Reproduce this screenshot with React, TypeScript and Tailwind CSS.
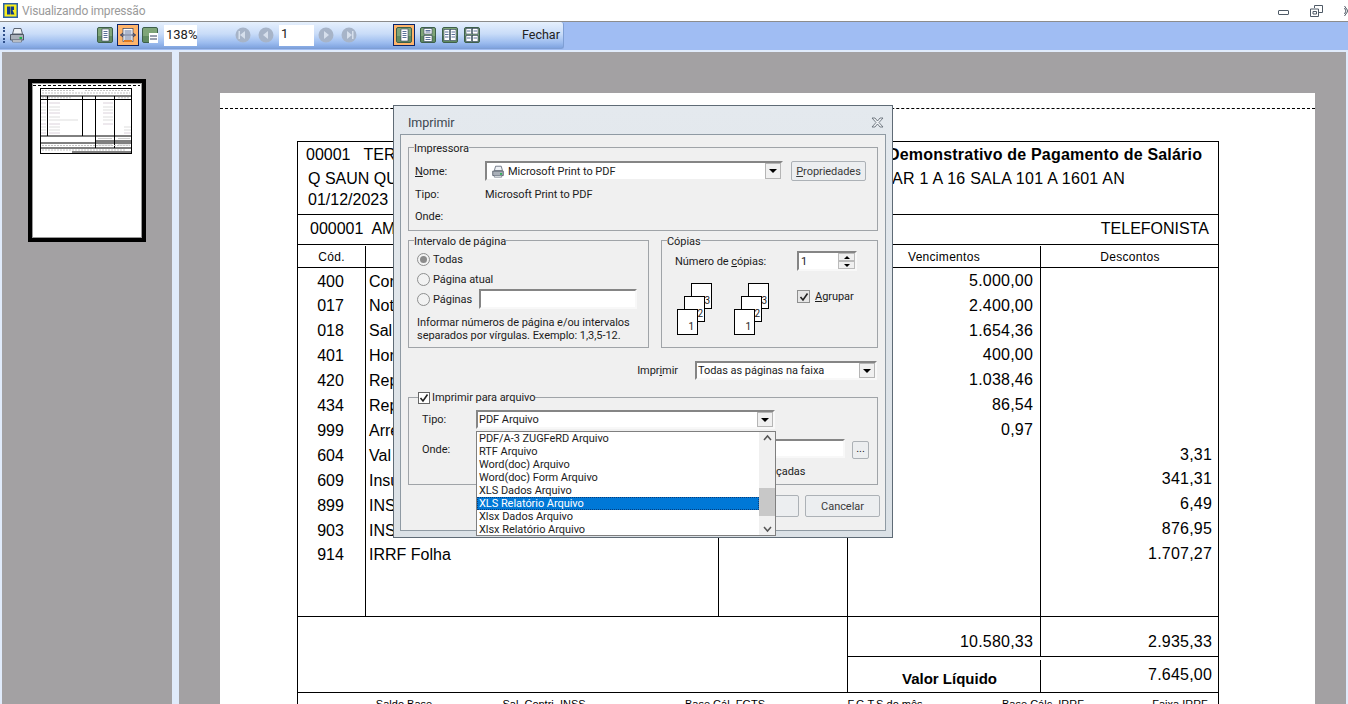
import React from 'react';

const rows = [
  ['400', 'Cor', '5.000,00', ''],
  ['017', 'Not', '2.400,00', ''],
  ['018', 'Sal', '1.654,36', ''],
  ['401', 'Hor', '400,00', ''],
  ['420', 'Rep', '1.038,46', ''],
  ['434', 'Rep', '86,54', ''],
  ['999', 'Arre', '0,97', ''],
  ['604', 'Val', '', '3,31'],
  ['609', 'Insu', '', '341,31'],
  ['899', 'INS', '', '6,49'],
  ['903', 'INS', '', '876,95'],
  ['914', 'IRRF Folha', '', '1.707,27'],
];

const tipos = [
  'PDF/A-3 ZUGFeRD Arquivo',
  'RTF Arquivo',
  'Word(doc) Arquivo',
  'Word(doc) Form Arquivo',
  'XLS Dados Arquivo',
  'XLS Relatório Arquivo',
  'Xlsx Dados Arquivo',
  'Xlsx Relatório Arquivo',
];

function ToolIcon({ kind }: { kind: 'page' | 'zoom' | 'facing' | 'two' | 'four' }) {
  return (
    <svg width="16" height="16" viewBox="0 0 16 16">
      <rect x="0.5" y="0.5" width="15" height="15" rx="1.5" fill="#7fa578" stroke="#3d5f4a" />
      <rect x="1" y="9" width="14" height="6" fill="#4d7a52" opacity="0.6" />
      {kind === 'page' && (
        <>
          <rect x="5" y="2" width="7" height="12" fill="#fff" stroke="#33415f" strokeWidth="0.6" />
          <path d="M6.5 4.5h4M6.5 6.5h4M6.5 8.5h4M6.5 10.5h4" stroke="#5a6f9a" />
        </>
      )}
      {kind === 'zoom' && (
        <>
          <rect x="7" y="6" width="9" height="10" fill="#fff" />
          <path d="M8 9h7M8 12h7" stroke="#33415f" />
        </>
      )}
      {kind === 'facing' && (
        <>
          <rect x="4" y="1.5" width="8" height="5.5" fill="#fff" stroke="#33415f" strokeWidth="0.6" />
          <rect x="4" y="8.5" width="8" height="6" fill="#fff" stroke="#33415f" strokeWidth="0.6" />
          <path d="M5.5 3.5h5M5.5 5h5M5.5 10.5h5M5.5 12.5h5" stroke="#5a6f9a" />
        </>
      )}
      {kind === 'two' && (
        <>
          <rect x="2" y="2.5" width="5.5" height="11" fill="#fff" stroke="#33415f" strokeWidth="0.6" />
          <rect x="8.5" y="2.5" width="5.5" height="11" fill="#fff" stroke="#33415f" strokeWidth="0.6" />
          <path d="M3 5h3.5M3 7.5h3.5M3 10h3.5M9.5 5H13M9.5 7.5H13M9.5 10H13" stroke="#5a6f9a" />
        </>
      )}
      {kind === 'four' && (
        <>
          <rect x="2" y="1.5" width="5.5" height="5.5" fill="#fff" stroke="#33415f" strokeWidth="0.6" />
          <rect x="8.5" y="1.5" width="5.5" height="5.5" fill="#fff" stroke="#33415f" strokeWidth="0.6" />
          <rect x="2" y="8.5" width="5.5" height="6" fill="#fff" stroke="#33415f" strokeWidth="0.6" />
          <rect x="8.5" y="8.5" width="5.5" height="6" fill="#fff" stroke="#33415f" strokeWidth="0.6" />
          <path d="M3 4h3.5M9.5 4H13M3 11h3.5M9.5 11H13" stroke="#5a6f9a" />
        </>
      )}
    </svg>
  );
}

function WidthIcon() {
  return (
    <svg width="16" height="16" viewBox="0 0 16 16">
      <rect x="3" y="1.5" width="10" height="13" fill="#fff" stroke="#33415f" strokeWidth="0.7" />
      <path d="M4.5 4h7M4.5 6h7M4.5 10h7M4.5 12h7" stroke="#5a6f9a" />
      <path d="M0.5 8h15M3 6L0.5 8 3 10M13 6l2.5 2-2.5 2" fill="none" stroke="#2c3f6b" />
      <rect x="4" y="13" width="8" height="2" fill="#e07a1f" />
    </svg>
  );
}

function NavButton({ dir, bar }: { dir: 'l' | 'r'; bar?: boolean }) {
  return (
    <svg width="16" height="16" viewBox="0 0 16 16">
      <circle cx="8" cy="8" r="7.5" fill="#a7b4c8" />
      {dir === 'l' ? <path d="M10 4v8L5 8z" fill="#d6dfec" /> : <path d="M6 4v8l5-4z" fill="#d6dfec" />}
      {bar && (dir === 'l' ? <rect x="3.5" y="4" width="1.5" height="8" fill="#d6dfec" /> : <rect x="11" y="4" width="1.5" height="8" fill="#d6dfec" />)}
    </svg>
  );
}

function PrinterIcon({ small }: { small?: boolean }) {
  return (
    <svg width={small ? 18 : 16} height={small ? 13 : 16} viewBox="0 0 16 16">
      <path d="M5 1.5h7L13.5 7h-10z" fill="#eef1f5" stroke="#5b6472" />
      <path d="M1.5 7.5h13v5.500h-13z" fill="#a9afb8" stroke="#4e5663" />
      <path d="M3.5 13h9v2h-9z" fill="#f4f6f8" stroke="#7b8390" />
      <rect x="10.5" y="10" width="2.5" height="2" fill="#22b14c" />
    </svg>
  );
}

function ArrowButton() {
  return (
    <span className="flex h-full w-[16px] items-center justify-center border border-[#b5b5b5] bg-[#f0f0f0]">
      <span className="h-0 w-0 border-x-[4px] border-t-[4px] border-x-transparent border-t-black" />
    </span>
  );
}

function Radio({ on }: { on?: boolean }) {
  return (
    <span className="flex h-[13px] w-[13px] items-center justify-center rounded-full border border-[#8e8f8f] bg-[#f2f2f2]">
      {on && <span className="h-[7px] w-[7px] rounded-full bg-[#8b8b8b]" />}
    </span>
  );
}

function Check() {
  return (
    <svg width="10" height="10" viewBox="0 0 10 10">
      <path d="M1.5 5l2.5 3 4.5-6.5" fill="none" stroke="#222" strokeWidth="1.6" />
    </svg>
  );
}

function Pages() {
  return (
    <div className="relative h-[52px] w-[35px]">
      <div className="absolute left-[14px] top-0 flex h-[26px] w-[21px] items-end justify-end border border-black bg-white pr-px text-[10px] leading-[14px]">3</div>
      <div className="absolute left-[7px] top-[13px] flex h-[26px] w-[21px] items-end justify-end border border-black bg-white pr-px text-[10px] leading-[14px]">2</div>
      <div className="absolute left-0 top-[26px] flex h-[26px] w-[21px] items-end justify-end border border-black bg-white pr-[3px] text-[10px] leading-[14px]">1</div>
    </div>
  );
}

function Group({ title, className, legend = 'ml-[5px] pt-[2px]', children }: { title: React.ReactNode; className: string; legend?: string; children: React.ReactNode }) {
  return (
    <fieldset className={`min-w-0 border border-[#a0a4a8] ${className}`}>
      <legend className={`flex h-[13px] items-center leading-[13px] ${legend}`}>{title}</legend>
      {children}
    </fieldset>
  );
}

function PrintDialog() {
  return (
    <div className="absolute left-[393px] top-[105px] flex h-[433px] w-[500px] flex-col border border-[#5f6b76] bg-[linear-gradient(180deg,#e4e9ee,#dbe1e6)] px-[6px] pb-[6px] font-['Roboto',sans-serif] text-[11px] leading-[13px] tracking-[-0.05px] text-[#1c1c1c]">
      <div className="flex h-[28px] shrink-0 items-center justify-between pl-[8px] pr-[2px] pt-[4px]">
        <span className="text-[12.5px] text-[#3c4650]">Imprimir</span>
        <svg width="13" height="11" viewBox="0 0 13 11">
          <path d="M1 1h3l2.500 3L9 1h3L8 5.500l4 4.500H9L6.500 7 4 10H1l4-4.500z" fill="#eef1f4" stroke="#59626c" strokeWidth="0.8" />
        </svg>
      </div>
      <div className="relative flex-1 border border-[#8f9aa3] bg-[#f0f0f0] px-[7px] pt-[6px]">
        <Group title="Impressora" className="h-[90px]">
          <div className="pl-[6px]">
            <div className="mt-[7px] flex h-[20px] items-center">
              <span className="w-[70px]"><span className="underline">N</span>ome:</span>
              <div className="flex h-[20px] w-[298px] items-center border-2 border-[#858585] border-b-[#f0f0f0] border-r-[#f0f0f0] bg-white pl-[2px]">
                <PrinterIcon small />
                <span className="ml-px flex-1">Microsoft Print to PDF</span>
                <ArrowButton />
              </div>
              <button className="ml-[8px] h-[20px] w-[75px] rounded-[2px] border border-[#acb1b6] bg-[#eceef0] text-[11px] text-[#3a3a3a]"><span className="underline">P</span>ropriedades</button>
            </div>
            <div className="mt-[7px] flex h-[13px] items-center">
              <span className="w-[70px]">Tipo:</span>
              <span>Microsoft Print to PDF</span>
            </div>
            <div className="mt-[9px]">Onde:</div>
          </div>
        </Group>
        <div className="mt-[3px] flex gap-[12px]">
          <Group title="Intervalo de página" className="h-[114px] w-[241px]">
            <div className="pl-[8px]">
              <div className="mt-[5px] flex h-[14px] items-center gap-[3px]"><Radio on />Todas</div>
              <div className="mt-[6px] flex h-[14px] items-center gap-[3px]"><Radio />Página atual</div>
              <div className="mt-[3px] flex h-[20px] items-center gap-[3px]">
                <Radio /><span className="w-[43px]">Páginas</span>
                <span className="h-[20px] w-[158px] border-2 border-[#858585] border-b-[#f8f8f8] border-r-[#f8f8f8] bg-white" />
              </div>
              <p className="mt-[7px] whitespace-nowrap">Informar números de página e/ou intervalos<br />separados por vírgulas. Exemplo: 1,3,5-12.</p>
            </div>
          </Group>
          <Group title="Cópias" className="h-[114px] w-[217px]">
            <div className="pl-[13px]">
              <div className="mt-[4px] flex h-[20px] items-center">
                <span className="w-[122px]">Número de <span className="underline">c</span>ópias:</span>
                <div className="flex h-[20px] w-[60px] items-center justify-between border-2 border-[#858585] border-b-[#f8f8f8] border-r-[#f8f8f8] bg-white pl-[2px]">
                  1
                  <span className="flex h-full w-[17px] flex-col">
                    <span className="flex flex-1 items-center justify-center border border-[#bbb] bg-[#f0f0f0]"><span className="h-0 w-0 border-x-[3px] border-b-[3px] border-x-transparent border-b-black" /></span>
                    <span className="flex flex-1 items-center justify-center border border-[#bbb] bg-[#f0f0f0]"><span className="h-0 w-0 border-x-[3px] border-t-[3px] border-x-transparent border-t-black" /></span>
                  </span>
                </div>
              </div>
              <div className="mt-[12px] flex">
                <div className="ml-[2px] flex gap-[22px] leading-none"><Pages /><Pages /></div>
                <div className="ml-[28px] mt-[7px] flex h-[13px] items-center gap-[5px]">
                  <span className="flex h-[13px] w-[13px] items-center justify-center border border-[#8e8f8f] bg-[#e6e6e6]"><Check /></span>
                  <span><span className="underline">A</span>grupar</span>
                </div>
              </div>
            </div>
          </Group>
        </div>
        <div className="mt-[13px] flex h-[19px] items-center justify-end pr-px">
          <span className="mr-[17px]">Impr<span className="underline">i</span>mir</span>
          <div className="flex h-[19px] w-[182px] items-center justify-between border-2 border-[#858585] border-b-[#f8f8f8] border-r-[#f8f8f8] bg-white pl-px">
            Todas as páginas na faixa
            <ArrowButton />
          </div>
        </div>
        <Group
          title={
            <span className="flex items-center gap-[2px]">
              <span className="flex h-[12px] w-[12px] items-center justify-center border border-[#666] bg-white"><Check /></span>
              Imprimir para arquivo
            </span>
          }
          legend="ml-[9px]"
          className="mt-[11px] h-[94px]"
        >
          <div className="pl-[13px]">
            <div className="mt-[6px] flex h-[19px] items-center">
              <span className="w-[54px]">Tipo:</span>
              <div className="flex h-[19px] w-[299px] items-center justify-between border-2 border-[#858585] border-b-[#f8f8f8] border-r-[#f8f8f8] bg-white pl-px">
                PDF Arquivo
                <ArrowButton />
              </div>
            </div>
            <div className="mt-[11px] flex h-[19px] items-center">
              <span className="w-[430px]">Onde:</span>
              <button className="flex h-[18px] w-[17px] shrink-0 items-center justify-center rounded-[2px] border border-[#acb1b6] bg-[#eceef0] pb-[2px]">...</button>
            </div>
          </div>
        </Group>
        <button className="absolute left-[404px] top-[360px] h-[22px] w-[75px] rounded-[2px] border border-[#acb1b6] bg-[#eceef0] text-[#3a3a3a]">Cancelar</button>
        <button className="absolute left-[300px] top-[360px] h-[22px] w-[98px] rounded-[2px] border border-[#acb1b6] bg-[#eceef0]" />
        <span className="absolute left-[375px] top-[304px] h-[19px] w-[69px] border-2 border-[#858585] border-b-[#f8f8f8] border-l-0 border-r-[#f8f8f8] bg-white" />
        <span className="absolute left-[375px] top-[330px]">çadas</span>
      </div>
      <div className="absolute left-[82px] top-[325px] flex h-[105px] w-[300px] border border-[#7f7f7f] bg-white leading-[13px]">
        <div className="flex-1">
          {tipos.map((t) =>
            t === 'XLS Relatório Arquivo' ? (
              <div key={t} className="h-[13px] border border-dotted border-[#0a3d78] bg-[#0078d7] pl-px leading-[11px] text-white">{t}</div>
            ) : (
              <div key={t} className="h-[13px] pl-[2px]">{t}</div>
            )
          )}
        </div>
        <div className="relative flex w-[16px] flex-col items-center justify-between bg-[#f0f0f0] py-[2px]">
          <svg width="9" height="8" viewBox="0 0 9 8"><path d="M1 6l3.500-4L8 6" fill="none" stroke="#555" strokeWidth="1.5" /></svg>
          <span className="absolute left-0 top-[56px] h-[28px] w-full bg-[#c8c8c8]" />
          <svg width="9" height="8" viewBox="0 0 9 8"><path d="M1 2l3.500 4L8 2" fill="none" stroke="#555" strokeWidth="1.5" /></svg>
        </div>
      </div>
    </div>
  );
}

function Thumb() {
  const vLines = [47, 82, 95, 114];
  const bars = [103, 107, 110, 113, 117, 120, 124, 127, 130, 133];
  return (
    <div className="ml-[26px] mt-[27px] h-[163px] w-[118px] border-4 border-black bg-white shadow-[inset_0_0_0_1px_#9a9a9a]">
      <svg width="110" height="155" viewBox="32 83 110 155">
        <rect x="33" y="84" width="108" height="153" fill="#fff" />
        <path d="M33 85.500H140" stroke="#000" strokeDasharray="3 2" />
        <rect x="40.500" y="88.500" width="91" height="65" fill="none" stroke="#000" />
        <path d="M41 96H131M41 99.500H131M41 136H131M95 141H131M41 143H131M41 148H131M72 152H131" stroke="#000" />
        {vLines.map((x) => (
          <path key={x} d={`M${x + 0.5} 96V136`} stroke="#000" />
        ))}
        <path d="M95.500 136V148M114.500 136V148" stroke="#000" />
        <path d="M42 90.500H75M85 90.500H130M42 93H130M42 97.800H72M118 97.800H130M42 145.500H130M42 150H126" stroke="#c4c4c4" strokeDasharray="2 1" />
        {bars.map((y, i) => (
          <g key={y} stroke={i % 3 === 0 ? '#d2c6d2' : '#d4d4d4'} strokeWidth="0.8">
            <path d={`M41 ${y}H46M49 ${y}H${i === 5 ? 78 : 60}`} />
            {i < 7 && <path d={`M103 ${y}H113`} />}
            {i > 6 && <path d={`M124 ${y}H131`} />}
          </g>
        ))}
        <path d="M98 138.500H112M118 138.500H130M98 145H112M118 145H130" stroke="#cfcfcf" />
      </svg>
    </div>
  );
}

export default function App() {
  return (
    <div className="flex h-[704px] w-[1348px] flex-col overflow-hidden bg-white font-['Roboto',sans-serif]">
      <div className="flex h-[22px] shrink-0 items-center justify-between border-b border-[#8c8c8c] bg-white">
        <div className="flex items-center">
          <svg className="ml-[3px]" width="15" height="15" viewBox="0 0 15 15">
            <rect width="15" height="15" fill="#2d62a8" />
            <rect x="1.500" y="1.500" width="12" height="12" fill="#f7ee1e" />
            <path d="M4 3.500h3.500v8H4zM8 3.500h3v3.500H9.500l2 4.500H8z" fill="#123c8a" />
          </svg>
          <span className="ml-[4px] text-[12px] tracking-[-0.2px] text-[#9a9a9a]">Visualizando impressão</span>
        </div>
        <div className="flex items-center">
          <span className="mt-[3px] h-[5px] w-[11px] rounded-[1px] border border-[#4f5a66]" />
          <svg className="ml-[21px]" width="13" height="12" viewBox="0 0 13 12">
            <path d="M4.500 3V.5h8v7H9M.5 4h8v7.500h-8zM3 6.500h3.500V9H3z" fill="none" stroke="#4f5a66" />
          </svg>
          <svg className="ml-[21px]" width="4" height="12" viewBox="0 0 4 12">
            <path d="M.5 1L4 6 .5 11M.5 3L2 6 .5 9" fill="none" stroke="#4f5a66" />
          </svg>
        </div>
      </div>
      <div className="h-[28px] shrink-0 bg-[#a0bdf3]">
        <div className="flex h-[27px] w-[564px] items-center rounded-r-[3px] border-b border-r border-[#7f9fd4] bg-[linear-gradient(180deg,#e6f0fd_0%,#c9dcf8_45%,#9cbcef_80%,#7fa3df_100%)] pl-[3px] text-[#222]">
          <span className="h-[16px] w-[2px] border-l-2 border-dotted border-[#2f4f8a]" />
          <span className="ml-[4px]"><PrinterIcon /></span>
          <span className="ml-[72px]"><ToolIcon kind="page" /></span>
          <span className="ml-[4px] flex h-[22px] w-[22px] items-center justify-center border border-[#0a246a] bg-[#ffb46a]"><WidthIcon /></span>
          <span className="ml-[3px]"><ToolIcon kind="zoom" /></span>
          <span className="ml-[6px] flex h-[21px] w-[33px] items-center bg-white pl-[2px] text-[13px]">138%</span>
          <span className="ml-[38px] flex gap-[7px]"><NavButton dir="l" bar /><NavButton dir="l" /></span>
          <span className="ml-[5px] flex h-[21px] w-[35px] items-start bg-white pl-[2px] text-[13px] leading-[18px]">1</span>
          <span className="ml-[4px] flex gap-[7px]"><NavButton dir="r" /><NavButton dir="r" bar /></span>
          <span className="ml-[36px] flex h-[22px] w-[22px] items-center justify-center border border-[#0a246a] bg-[#ffb46a]"><ToolIcon kind="page" /></span>
          <span className="ml-[5px] flex gap-[6px]"><ToolIcon kind="facing" /><ToolIcon kind="two" /><ToolIcon kind="four" /></span>
          <span className="ml-[42px] text-[12.5px]">Fechar</span>
        </div>
      </div>
      <div className="relative flex min-h-0 flex-1 bg-[#e0ebfb] pb-0 pl-[2px] pr-[2px] pt-[2px]">
        <div className="w-[170px] shrink-0 bg-[#a3a1a3]"><Thumb /></div>
        <div className="ml-[7px] min-w-0 flex-1 overflow-hidden bg-[#a3a1a3] pl-[41px] pt-[41px]">
          <div className="h-[700px] w-[1095px] bg-white pl-[77px] pt-[15px] font-['Liberation_Sans',sans-serif] text-[16px] text-black">
            <div className="-ml-[77px] border-t border-dashed border-black" />
            <div className="mt-[32px] w-[922px] border border-black">
              <div className="h-[73px] border-b border-black">
                <div className="grid grid-cols-[590px_330px] pt-[1px]">
                  <div className="whitespace-pre pl-[8px] leading-[24px]">00001   TER</div>
                  <div className="whitespace-nowrap pr-[18px] text-right font-bold leading-[24px] tracking-[0.2px]">Demonstrativo de Pagamento de Salário</div>
                  <div className="pl-[10px] leading-[24px]">Q SAUN QU</div>
                  <div className="whitespace-nowrap pr-[93px] text-right leading-[24px] tracking-[0.25px]">AR 1 A 16 SALA 101 A 1601 AN</div>
                  <div className="pl-[10px] leading-[18px]">01/12/2023</div>
                </div>
              </div>
              <div className="flex h-[30px] items-center justify-between whitespace-pre border-b border-black pb-[2px] pl-[12px] pr-[9px]">
                <span>000001  AM</span>
                <span>TELEFONISTA</span>
              </div>
              <div className="grid h-[23px] grid-cols-[68px_353px_129px_193px_178px] items-center border-b border-black pt-[1px] text-[12px] tracking-[0.3px]">
                <span className="flex h-full items-center justify-center border-r border-black">Cód.</span>
                <span className="h-full border-r border-black" />
                <span className="h-full border-r border-black" />
                <span className="flex h-full items-center justify-center border-r border-black">Vencimentos</span>
                <span className="text-center">Descontos</span>
              </div>
              <div className="grid h-[349px] grid-cols-[68px_353px_129px_193px_178px] border-b border-black leading-[24.9px]">
                <div className="border-r border-black pr-[2px] pt-[1.500px] text-center">
                  {rows.map((r, i) => <div key={i}>{r[0]}</div>)}
                </div>
                <div className="border-r border-black pl-[3px] pt-[1.500px]">
                  {rows.map((r, i) => <div key={i}>{r[1]}</div>)}
                </div>
                <div className="border-r border-black" />
                <div className="border-r border-black pr-[7px] pt-[1px] text-right tracking-[0.2px]">
                  {rows.map((r, i) => <div key={i} className="h-[24.8px]">{r[2]}</div>)}
                </div>
                <div className="pr-[7px] pt-[1px] text-right tracking-[0.2px]">
                  {rows.map((r, i) => <div key={i} className="h-[24.8px]">{r[3]}</div>)}
                </div>
              </div>
              <div className="grid h-[76px] grid-cols-[550px_193px_178px] border-b border-black tracking-[0.2px]">
                <div className="row-span-2 border-r border-black" />
                <div className="flex h-[40px] items-end justify-end border-b border-r border-black pb-[2px] pr-[7px]">10.580,33</div>
                <div className="flex h-[40px] items-end justify-end border-b border-black pb-[2px] pr-[7px]">2.935,33</div>
                <div className="flex items-end border-r border-black pb-[2px] pl-[54px] text-[15px] font-bold tracking-normal">Valor Líquido</div>
                <div className="flex items-end justify-end pb-[5px] pr-[7px]">7.645,00</div>
              </div>
              <div className="grid grid-cols-[140px_140px_222px_98px_218px_56px] whitespace-nowrap pl-[36px] pt-[5px] text-center text-[11px] leading-[13px]">
                <span>Saldo Base</span>
                <span>Sal. Contri. INSS</span>
                <span>Base Cál. FGTS</span>
                <span>F.G.T.S do mês</span>
                <span>Base Cálc. IRRF</span>
                <span>Faixa IRRF</span>
              </div>
            </div>
          </div>
        </div>
      </div>
      <PrintDialog />
    </div>
  );
}
